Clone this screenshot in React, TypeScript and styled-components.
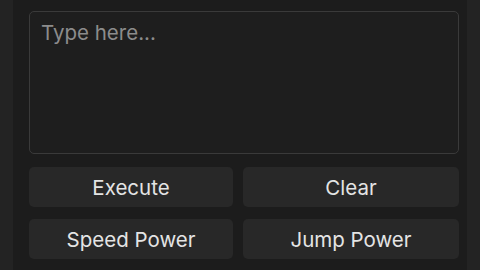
import React from "react";
import styled, { createGlobalStyle } from "styled-components";

const Global = createGlobalStyle`
  html, body { margin: 0; padding: 0; background: #1c1c1c; }
  body { font-family: Inter, "Noto Sans", sans-serif; }
  * { box-sizing: border-box; }
`;

const Frame = styled.div`
  width: 480px;
  height: 270px;
  display: flex;
  background: #1c1c1c;
  overflow: hidden;
`;

const SideStrip = styled.div<{ $w: number }>`
  width: ${(p) => p.$w}px;
  flex: none;
  background: #232323;
`;

const Panel = styled.div`
  flex: 1;
  display: flex;
  flex-direction: column;
  padding: 11px 8px 0 16px;
  gap: 13px;
`;

const Input = styled.textarea`
  height: 143px;
  width: 100%;
  resize: none;
  background: #1e1e1e;
  border: 1px solid #3a3a3a;
  border-radius: 5px;
  padding: 8px 11px;
  font-family: Inter, "Noto Sans", sans-serif;
  font-size: 20.5px;
  color: #e6e6e6;
  outline: none;
  &::placeholder { color: #8c8c8c; }
`;

const Grid = styled.div`
  display: grid;
  grid-template-columns: 204px 216px;
  column-gap: 10px;
  row-gap: 12px;
`;

const Button = styled.button`
  height: 40px;
  background: #282828;
  border: none;
  border-radius: 5px;
  color: #e4e4e4;
  font-family: Inter, "Noto Sans", sans-serif;
  font-size: 20.5px;
  padding: 0;
  cursor: pointer;
`;

export default function App() {
  return (
    <>
      <Global />
      <Frame>
        <SideStrip $w={13} />
        <Panel>
          <Input placeholder="Type here..." />
          <Grid>
            <Button>Execute</Button>
            <Button>Clear</Button>
            <Button>Speed Power</Button>
            <Button>Jump Power</Button>
          </Grid>
        </Panel>
        <SideStrip $w={13} />
      </Frame>
    </>
  );
}
